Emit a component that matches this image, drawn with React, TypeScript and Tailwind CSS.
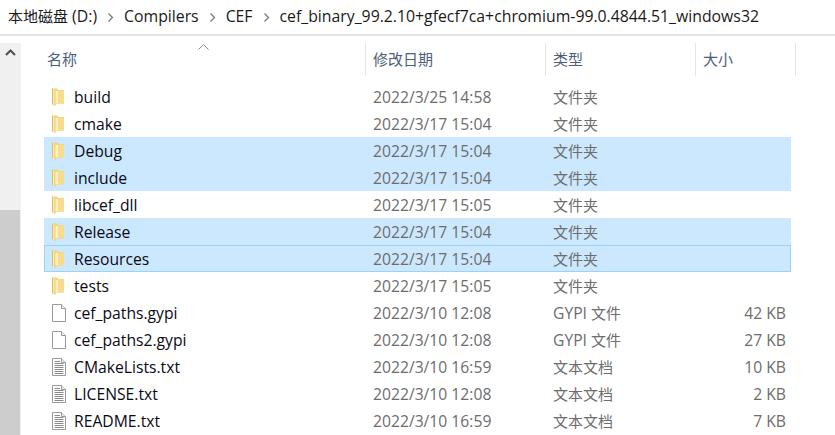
const font = { fontFamily: '"Open Sans","Noto Sans CJK SC",sans-serif' };

type Row = { name: string; date: string; type: string; size?: string; icon: "folder" | "blank" | "text"; sel?: boolean; focus?: boolean };

const rows: Row[] = [
  { name: "build", date: "2022/3/25 14:58", type: "文件夹", icon: "folder" },
  { name: "cmake", date: "2022/3/17 15:04", type: "文件夹", icon: "folder" },
  { name: "Debug", date: "2022/3/17 15:04", type: "文件夹", icon: "folder", sel: true },
  { name: "include", date: "2022/3/17 15:04", type: "文件夹", icon: "folder", sel: true },
  { name: "libcef_dll", date: "2022/3/17 15:05", type: "文件夹", icon: "folder" },
  { name: "Release", date: "2022/3/17 15:04", type: "文件夹", icon: "folder", sel: true },
  { name: "Resources", date: "2022/3/17 15:04", type: "文件夹", icon: "folder", sel: true, focus: true },
  { name: "tests", date: "2022/3/17 15:05", type: "文件夹", icon: "folder" },
  { name: "cef_paths.gypi", date: "2022/3/10 12:08", type: "GYPI 文件", size: "42 KB", icon: "blank" },
  { name: "cef_paths2.gypi", date: "2022/3/10 12:08", type: "GYPI 文件", size: "27 KB", icon: "blank" },
  { name: "CMakeLists.txt", date: "2022/3/10 16:59", type: "文本文档", size: "10 KB", icon: "text" },
  { name: "LICENSE.txt", date: "2022/3/10 12:08", type: "文本文档", size: "2 KB", icon: "text" },
  { name: "README.txt", date: "2022/3/10 16:59", type: "文本文档", size: "7 KB", icon: "text" },
];

function Mixed({ s }: { s: string }) {
  const parts = s.split(/([\u4e00-\u9fff]+)/);
  return (
    <>
      {parts.map((p, i) =>
        i % 2 === 1 ? (
          <span key={i} className="text-[15px]">
            {p}
          </span>
        ) : (
          <span key={i}>{p}</span>
        )
      )}
    </>
  );
}

function Folder() {
  return (
    <svg width="14" height="18" viewBox="0 0 14 18">
      <path d="M0 0.5 H5 L6.5 2 H12 V15.5 H0 Z" fill="#f3d27a" />
      <path d="M3 2.5 H12 V15.5 H3 Z" fill="#f8dc8e" />
      <path d="M0 0.5 L3 2 V18 L0 16.5 Z" fill="#fbe9b0" />
      <path d="M0.5 0.5 V16.5" stroke="#e6bd5c" />
      <path d="M3 2 V18" stroke="#e9c76e" />
      <path d="M3.5 3 H6 V15 H3.5 Z" fill="#fdf0c4" />
    </svg>
  );
}

function FileIcon({ lines }: { lines: boolean }) {
  return (
    <svg width="14" height="18" viewBox="0 0 14 18">
      <path d="M0.5 0.5 H9.5 L13.5 4.5 V17.5 H0.5 Z" fill="#fff" stroke="#9a9a9a" />
      <path d="M9.5 0.5 V4.5 H13.5" fill="#eee" stroke="#9a9a9a" />
      {lines && (
        <path d="M2.5 3.5 H8 M2.5 5.5 H11.5 M2.5 7.5 H11.5 M2.5 9.5 H11.5 M2.5 11.5 H11.5 M2.5 13.5 H11.5 M2.5 15.5 H11.5" stroke="#8a8a8a" />
      )}
    </svg>
  );
}

function Chevron() {
  return (
    <svg width="7" height="9" viewBox="0 0 7 9" className="mx-[10px]">
      <path d="M1.5 0.5 L5.5 4.5 L1.5 8.5" fill="none" stroke="#7a7a7a" strokeWidth="1.3" />
    </svg>
  );
}

function HeadCell({ w, label, pl }: { w: string; label: string; pl: string }) {
  return (
    <div className={`${w} ${pl} h-full flex items-center border-r border-[#e5e5e5] text-[15px] text-[#4c607a]`}>
      {label}
    </div>
  );
}

export default function App() {
  return (
    <div className="w-[835px] h-[435px] bg-white overflow-hidden flex flex-col" style={font}>
      <div className="h-[36px] shrink-0 flex items-center pl-[8px] border-b-2 border-[#e3e3e3] text-[15.8px] text-[#1a1a1a] whitespace-nowrap">
        <span>
          <Mixed s="本地磁盘 (D:)" />
        </span>
        <Chevron />
        <span>Compilers</span>
        <Chevron />
        <span>CEF</span>
        <Chevron />
        <span>cef_binary_99.2.10+gfecf7ca+chromium-99.0.4844.51_windows32</span>
      </div>
      <div className="flex flex-1 min-h-0 pt-[7px]">
        <div className="w-[21px] shrink-0 mr-[23px] flex flex-col bg-[#f0f0f0]">
          <div className="h-[167px] shrink-0 pt-[6px] pl-[5px]">
            <svg width="11" height="7" viewBox="0 0 11 7">
              <path d="M1 6 L5.5 1.5 L10 6" fill="none" stroke="#505050" strokeWidth="2" />
            </svg>
          </div>
          <div className="flex-1 bg-[#cdcdcd] w-[20px]" />
        </div>
        <div className="relative flex-1 min-w-0">
          <svg width="11" height="6" viewBox="0 0 11 6" className="absolute left-[154px] top-[1px]">
            <path d="M0.5 5.5 L5.5 0.5 L10.5 5.5" fill="none" stroke="#8a8a8a" />
          </svg>
          <div className="h-[33px] flex">
            <HeadCell w="w-[322px]" pl="pl-[3px]" label="名称" />
            <HeadCell w="w-[180px]" pl="pl-[7px]" label="修改日期" />
            <HeadCell w="w-[150px]" pl="pl-[7px]" label="类型" />
            <HeadCell w="w-[100px]" pl="pl-[7px]" label="大小" />
          </div>
          <div className="pt-[7px] w-[747px]">
            {rows.map((r) => (
              <div
                key={r.name}
                className={`h-[27px] flex items-center text-[15.7px] ${r.sel ? "bg-[#cce8ff]" : ""} ${r.focus ? "border border-[#99d1ff]" : ""}`}
              >
                <div className={`${r.focus ? "w-[29px] pl-[7px]" : "w-[30px] pl-[8px]"} shrink-0 flex items-center`}>
                  {r.icon === "folder" ? <Folder /> : <FileIcon lines={r.icon === "text"} />}
                </div>
                <div className="w-[299px] shrink-0 pt-[2px] text-[#0a0a14] whitespace-nowrap">{r.name}</div>
                <div className="w-[180px] shrink-0 pt-[2px] text-[#6d6d6d] whitespace-nowrap">{r.date}</div>
                <div className="w-[150px] shrink-0 pt-[2px] text-[#6d6d6d] whitespace-nowrap">
                  <Mixed s={r.type} />
                </div>
                <div className="w-[83px] shrink-0 pt-[2px] text-right text-[#6d6d6d]">{r.size}</div>
              </div>
            ))}
          </div>
        </div>
      </div>
    </div>
  );
}
